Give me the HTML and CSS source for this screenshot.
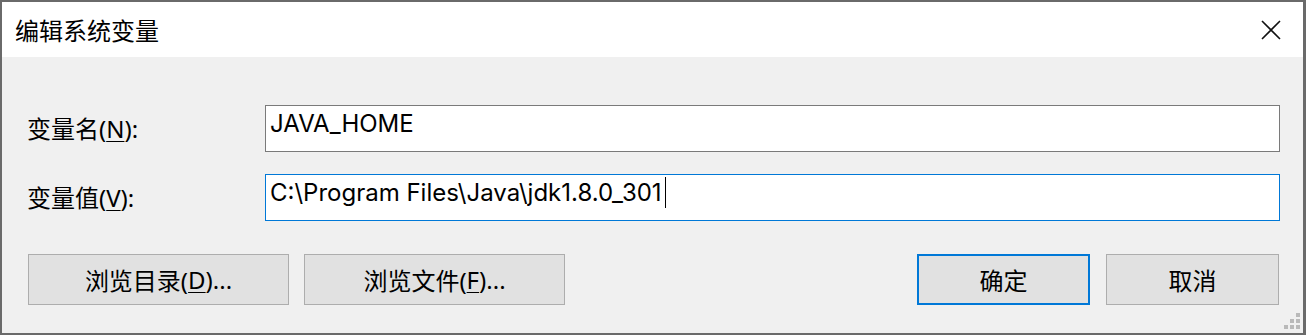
FILE: index.html
```html
<!DOCTYPE html>
<html lang="zh-CN">
<head>
<meta charset="utf-8">
<title>编辑系统变量</title>
<link rel="stylesheet" href="styles.css">
</head>
<body>
<div class="window">
  <div class="titlebar">
    <span class="title">编辑系统变量</span>
    <span class="close" aria-label="关闭">
      <svg width="20" height="20" viewBox="0 0 20 20"><path d="M1 1 L19 19 M19 1 L1 19" stroke="#111" stroke-width="1.6" fill="none"/></svg>
    </span>
  </div>
  <div class="content">
    <div class="form">
      <label class="label">变量名(<u>N</u>):</label>
      <div class="field">JAVA_HOME</div>
      <label class="label">变量值(<u>V</u>):</label>
      <div class="field focused">C:\Program Files\Java\jdk1.8.0_301<span class="caret"></span></div>
    </div>
    <div class="buttons">
      <div class="left-buttons">
        <button class="btn wide">浏览目录(<u>D</u>)...</button>
        <button class="btn wide">浏览文件(<u>F</u>)...</button>
      </div>
      <div class="right-buttons">
        <button class="btn narrow default">确定</button>
        <button class="btn narrow">取消</button>
      </div>
    </div>
    <div class="grip">
      <i class="g g3"></i>
      <i class="g g5"></i><i class="g g6"></i>
      <i class="g g7"></i><i class="g g8"></i><i class="g g9"></i>
    </div>
  </div>
</div>
</body>
</html>
```
FILE: styles.css
```css
* { box-sizing: border-box; }
html, body { margin: 0; padding: 0; }
body {
  width: 1306px;
  height: 335px;
  background: #6a6a6a;
  overflow: hidden;
  font-family: "Noto Sans", "Noto Sans CJK SC", sans-serif;
  color: #000;
}
.window {
  margin: 2px 0 0 2px;
  width: 1301px;
  height: 331px;
  display: flex;
  flex-direction: column;
  background: #f0f0f0;
}
.titlebar {
  height: 55px;
  background: #fff;
  display: flex;
  align-items: center;
  justify-content: space-between;
  padding: 0 22px 0 13px;
}
.title {
  font-family: "Noto Sans CJK SC", sans-serif;
  font-size: 24px;
  line-height: 1;
}
.close { display: flex; width: 20px; height: 20px; }
.content {
  position: relative;
  flex: 1;
  padding: 48px 23px 0 26px;
  display: flex;
  flex-direction: column;
}
.form {
  display: grid;
  grid-template-columns: 237px 1fr;
  grid-auto-rows: 47px;
  row-gap: 22px;
  align-items: center;
}
.label {
  font-size: 24px;
  line-height: 1;
  margin-left: -1px;
}
.label u, .btn u { text-underline-offset: 3px; text-decoration-thickness: 1px; }
.field {
  height: 47px;
  background: #fff;
  border: 1px solid #7a7a7a;
  font-family: "Inter", "Noto Sans", sans-serif;
  font-size: 24px;
  line-height: 24px;
  padding: 6px 4px 0 4px;
  display: flex;
  align-items: flex-start;
  white-space: pre;
}
.field.focused { border-color: #0078d7; }
.caret {
  display: block;
  width: 1px;
  height: 31px;
  background: #000;
  margin: -4px 0 0 3px;
}
.buttons {
  margin-top: 33px;
  display: flex;
  justify-content: space-between;
  padding-right: 1px;
}
.left-buttons, .right-buttons { display: flex; gap: 15px; }
.right-buttons { gap: 16px; }
.btn {
  height: 51px;
  background: #e1e1e1;
  border: 1px solid #adadad;
  font-family: "Noto Sans", "Noto Sans CJK SC", sans-serif;
  font-size: 24px;
  color: #000;
  padding: 0;
  display: flex;
  align-items: center;
  justify-content: center;
}
.btn.wide { width: 261px; }
.btn.narrow { width: 173px; }
.btn.default { border: 2px solid #0078d7; }
.grip {
  position: absolute;
  right: 3px;
  bottom: 4px;
  display: grid;
  grid-template-columns: repeat(3, 4px);
  grid-template-rows: repeat(3, 4px);
  gap: 2px;
}
.g { display: block; background: #b9b9b9; }
.g3 { grid-column: 3; grid-row: 1; }
.g5 { grid-column: 2; grid-row: 2; }
.g6 { grid-column: 3; grid-row: 2; }
.g7 { grid-column: 1; grid-row: 3; }
.g8 { grid-column: 2; grid-row: 3; }
.g9 { grid-column: 3; grid-row: 3; }
```
